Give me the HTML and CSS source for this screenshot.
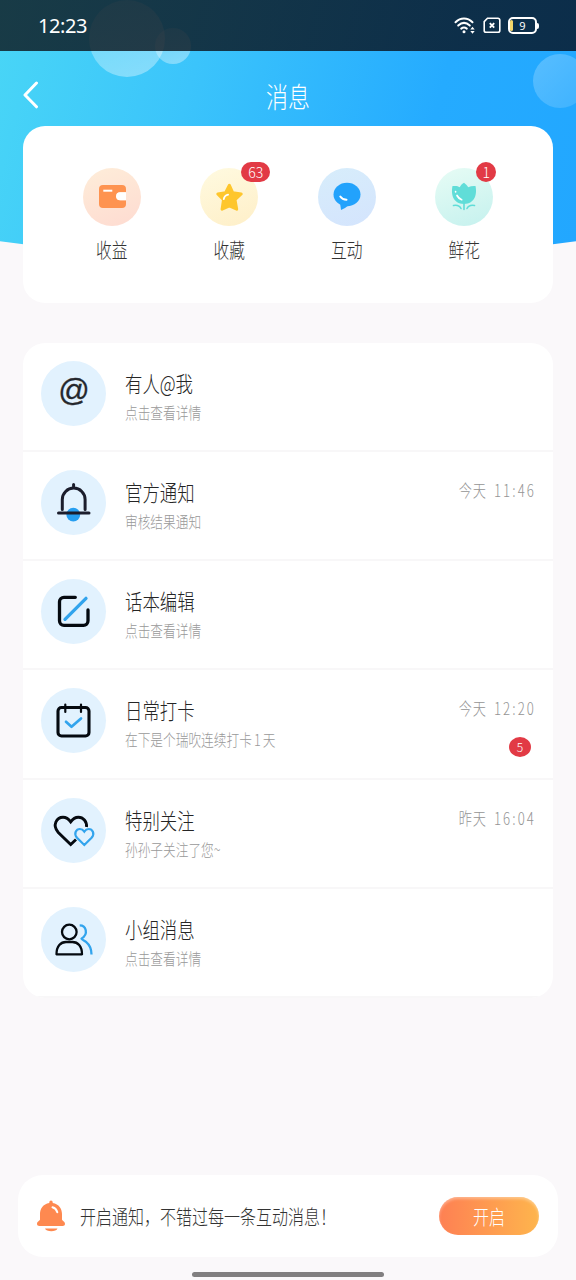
FILE: index.html
```html
<!DOCTYPE html>
<html lang="zh-CN">
<head>
    <meta charset="UTF-8">
    <meta name="viewport" content="width=device-width, initial-scale=1.0">
    <title>消息</title>
    <link rel="stylesheet" href="styles.css">
</head>
<body>
    <div class="page">
        <header class="header">
            <span class="bubble bubble-large"></span>
            <span class="bubble bubble-small"></span>
            <span class="bubble bubble-right"></span>

            <div class="status-bar">
                <span class="clock">12:23</span>
                <div class="status-icons">
                    <svg width="22" height="18" viewBox="0 0 22 18" fill="none" stroke="#fff" stroke-width="2" stroke-linecap="round">
                        <path d="M1.500 5.300C6.500.3 13.500.3 18.500 5.300M4.200 8.600c3.600-3.400 8-3.400 11.600 0M7.200 11.600c1.900-1.500 3.700-1.500 5.600 0"/>
                        <circle cx="10" cy="14.800" r="1.500" fill="#fff" stroke="none"/>
                        <path d="M16.300 12.500l2.200-2.700 2.200 2.700zM16.300 14l2.200 2.700 2.200-2.700z" fill="#fff" stroke="none"/>
                    </svg>
                    <svg class="sim" width="18" height="17" viewBox="0 0 18 17" fill="none" stroke="#fff" stroke-width="1.600">
                        <path d="M4.500 1.300H15a1.800 1.800 0 0 1 1.800 1.800v10.300a1.800 1.800 0 0 1-1.800 1.800H3a1.800 1.800 0 0 1-1.800-1.800V4.600z"/>
                        <path d="M6.800 6.200l4.400 4.400M11.200 6.200l-4.400 4.400" stroke-width="1.900"/>
                    </svg>
                    <span class="battery"><i class="battery-level"></i>9</span>
                </div>
            </div>

            <nav class="nav-bar">
                <svg class="back" width="16" height="28" viewBox="0 0 16 28" fill="none" stroke="#fff" stroke-width="3" stroke-linecap="round" stroke-linejoin="round">
                    <path d="M13.500 2L2 14l11.500 11.800"/>
                </svg>
                <h1 class="nav-title tall">消息</h1>
            </nav>
        </header>

        <!-- Shortcuts -->
        <section class="shortcuts">
            <a class="shortcut">
                <span class="shortcut-icon orange">
                    <svg width="58" height="58" viewBox="0 0 58 58">
                        <path fill="#fe9350" d="M20 17h19a4 4 0 0 1 4 4v3.300h-5.500a4 4 0 0 0 0 8H43V36a4 4 0 0 1-4 4H20a4 4 0 0 1-4-4V21a4 4 0 0 1 4-4z"/>
                        <path fill="#fff" d="M37 24.300h6v8h-6a4 4 0 0 1 0-8z"/>
                        <path stroke="#fff" stroke-width="2" d="M20.300 22.700h9"/>
                    </svg>
                </span>
                <span class="shortcut-name tall">收益</span>
            </a>
            <a class="shortcut">
                <span class="shortcut-icon yellow">
                    <svg width="58" height="58" viewBox="0 0 58 58">
                        <path fill="#fec62d" stroke="#fec62d" stroke-width="3" stroke-linejoin="round" d="M29.400 17.300l3.400 7.500 8.400 1.200-6.200 5.700 1.700 9.500-7.300-3.200-7.300 3.200 1.400-9.500-5.700-5.700 7.800-1.200z"/>
                        <path fill="none" stroke="#fff" stroke-width="1.800" stroke-linecap="round" d="M23.800 31.200c.2-2.200 1.800-4 4.300-4.600"/>
                    </svg>
                    <b class="badge badge-wide">63</b>
                </span>
                <span class="shortcut-name tall">收藏</span>
            </a>
            <a class="shortcut">
                <span class="shortcut-icon blue">
                    <svg width="58" height="58" viewBox="0 0 58 58" fill="#22a2fc">
                        <ellipse cx="29" cy="26.500" rx="13.500" ry="11.700"/>
                        <path d="M22 34.500l1 7.500q4-1.500 8-5z"/>
                        <path fill="none" stroke="#fff" stroke-width="2" stroke-linecap="round" d="M22.300 28.500q2 3.200 6.200 3.300"/>
                    </svg>
                </span>
                <span class="shortcut-name tall">互动</span>
            </a>
            <a class="shortcut">
                <span class="shortcut-icon green">
                    <svg width="58" height="58" viewBox="0 0 58 58">
                        <path fill="#60ddd8" d="M29 14.700q2.500 1.800 4.300 4.500 3-1.500 7.200-1.200c1.700 8.500-.5 17.500-11.500 18-11-.5-13.200-9.500-11.500-18 4.200-.3 5.200 0 7.200 1.200 1.600-2.800 2.600-3.500 4.300-4.500z"/>
                        <path fill="none" stroke="#60ddd8" stroke-width="1.600" stroke-linecap="round" d="M29 35v6.500M18.500 37.500q5.500-1 7.500 3M39.500 37.500q-5.500-1-7.500 3"/>
                        <path fill="none" stroke="#fff" stroke-width="1.700" stroke-linecap="round" d="M20.600 23.700v.1M22 27.500q1.500 3 4.700 4.200"/>
                    </svg>
                    <b class="badge">1</b>
                </span>
                <span class="shortcut-name tall">鲜花</span>
            </a>
        </section>

        <!-- Message list -->
        <ul class="messages">
            <li class="message">
                <span class="avatar at-sign">@</span>
                <div class="message-text">
                    <h2 class="message-title tall">有人@我</h2>
                    <p class="message-desc tall">点击查看详情</p>
                </div>
            </li>
            <li class="message">
                <span class="avatar">
                    <svg width="65" height="65" viewBox="0 0 65 65" fill="none" stroke="#1b1d2c" stroke-width="3" stroke-linecap="round">
                        <circle cx="32.300" cy="44.700" r="6.900" fill="#269ef0" stroke="none"/>
                        <path d="M21.300 39.500V29.500a11.400 11.400 0 0 1 22.800 0v10M32.600 14.500v3.500M17.500 43h30.500"/>
                    </svg>
                </span>
                <div class="message-text">
                    <h2 class="message-title tall">官方通知</h2>
                    <p class="message-desc tall">审核结果通知</p>
                </div>
                <div class="message-side"><time class="message-time tall">今天 <span class="digits">11:46</span></time></div>
            </li>
            <li class="message">
                <span class="avatar">
                    <svg width="65" height="65" viewBox="0 0 65 65" fill="none" stroke="#050a10" stroke-width="3.300" stroke-linecap="round">
                        <path d="M34.300 18.300H23a4.500 4.500 0 0 0-4.500 4.500v19a4.500 4.500 0 0 0 4.500 4.500h19.500a4.500 4.500 0 0 0 4.500-4.500V31"/>
                        <path stroke="#32a4ed" d="M24 40.300l21-21"/>
                    </svg>
                </span>
                <div class="message-text">
                    <h2 class="message-title tall">话本编辑</h2>
                    <p class="message-desc tall">点击查看详情</p>
                </div>
            </li>
            <li class="message">
                <span class="avatar">
                    <svg width="65" height="65" viewBox="0 0 65 65" fill="none" stroke="#050a10" stroke-width="3.100" stroke-linecap="round" stroke-linejoin="round">
                        <rect x="17" y="19.500" width="31" height="28.500" rx="3.500"/>
                        <path stroke-width="2.200" d="M24.300 16.500v7.500M40 16.500v7.500"/>
                        <path stroke="#32a4ed" stroke-width="2.700" d="M25 33.800l5.500 5 9.500-8.300"/>
                    </svg>
                </span>
                <div class="message-text">
                    <h2 class="message-title tall">日常打卡</h2>
                    <p class="message-desc tall">在下是个瑞吹连续打卡<span class="count">1</span>天</p>
                </div>
                <div class="message-side">
                    <time class="message-time tall">今天 <span class="digits">12:20</span></time>
                    <b class="unread">5</b>
                </div>
            </li>
            <li class="message">
                <span class="avatar">
                    <svg width="65" height="65" viewBox="0 0 65 65" fill="none" stroke="#050a10" stroke-width="2.900">
                        <path d="M35 41.500l-5.300 5L17.300 34.500c-6.500-7.500-1.500-15.300 4.700-15.300 3.300 0 5.700 1.800 7.700 4.600 2-2.800 4.400-4.600 7.700-4.600 4.800 0 8.600 4.300 8.100 9.800"/>
                        <path stroke="#32a4ed" stroke-width="2.200" d="M43.300 47l-7.300-7.200c-3.700-4.300-.7-8.800 2.900-8.800 1.900 0 3.300 1 4.400 2.600 1.100-1.600 2.500-2.600 4.400-2.600 3.600 0 6.600 4.500 2.900 8.800z"/>
                    </svg>
                </span>
                <div class="message-text">
                    <h2 class="message-title tall">特别关注</h2>
                    <p class="message-desc tall">孙孙子关注了您~</p>
                </div>
                <div class="message-side"><time class="message-time tall">昨天 <span class="digits">16:04</span></time></div>
            </li>
            <li class="message">
                <span class="avatar">
                    <svg width="65" height="65" viewBox="0 0 65 65" fill="none" stroke="#050a10" stroke-width="2.300" stroke-linejoin="round">
                        <circle cx="28.300" cy="25" r="7.300"/>
                        <path d="M15.500 47.300c0-8.300 4.300-12.300 9.500-12.300h6.500c5.200 0 9.500 4 9.500 12.300z"/>
                        <path stroke="#32a4ed" d="M38.700 18.300c6.500 0 9 8.700 1.800 13.300 1 1.500 2.700 1.700 4.500 3.200 3.300 2.700 5.500 6 5.500 12.700"/>
                    </svg>
                </span>
                <div class="message-text">
                    <h2 class="message-title tall">小组消息</h2>
                    <p class="message-desc tall">点击查看详情</p>
                </div>
            </li>
        </ul>

        <!-- Notification prompt -->
        <footer class="prompt">
            <svg class="prompt-bell" width="30" height="34" viewBox="0 0 30 34" fill="#fe8950">
                <path d="M13.300 3.300a1.700 1.700 0 0 1 3.400 0v.7c6.300 1 9.300 6 9.300 11v5.500c0 1.200 3 1.900 3 4.500 0 1.300-1 2-2.300 2H3.300C2 27 1 26.300 1 25c0-2.600 3-3.300 3-4.500V15c0-5 3-10 9.300-11z"/>
                <path d="M9 29.500h12.500c-1 3.700-11.500 3.700-12.500 0z"/>
                <path d="M16.500 8.300q3.800 1.200 4.800 5" fill="none" stroke="#fff" stroke-width="2" stroke-linecap="round"/>
            </svg>
            <span class="prompt-text tall">开启通知，不错过每一条互动消息！</span>
            <button class="prompt-button"><span class="tall">开启</span></button>
        </footer>
        <div class="home-indicator"></div>
    </div>
</body>
</html>
```

FILE: styles.css
```css
* {
    box-sizing: border-box;
}

body {
    margin: 0;
    background: #faf8fa;
    color: #333;
    font-family: "Noto Sans CJK SC", sans-serif;
    font-weight: 300;
}

h1, h2, p, ul {
    margin: 0;
    padding: 0;
    font-weight: 300;
}

svg {
    display: block;
}

.page {
    width: 576px;
    height: 1280px;
    overflow: hidden;
    display: flex;
    flex-direction: column;
}

/* narrow, tall lettering */
.tall {
    display: block;
    white-space: nowrap;
    transform: scaleY(1.27);
}

/* Header */
.header {
    position: relative;
    height: 261px;
    flex-shrink: 0;
    background: linear-gradient(105deg, #49d6f6 0%, #3bc4fb 33%, #25abff 72%, #22a7ff 100%);
    clip-path: circle(2100px at 50% -1839px);
}

.status-bar {
    position: relative;
    height: 51px;
    padding: 0 37px 0 38px;
    display: flex;
    align-items: center;
    justify-content: space-between;
    background: linear-gradient(100deg, rgba(12, 20, 26, 0.8), rgba(6, 15, 29, 0.8));
    color: #fff;
}

.clock {
    font-family: "Noto Sans", sans-serif;
    font-size: 20px;
    font-weight: 400;
    letter-spacing: -0.4px;
}

.status-icons {
    display: flex;
    align-items: center;
    gap: 7px;
}

.battery {
    position: relative;
    width: 29px;
    height: 17px;
    margin-right: 2px;
    border: 2px solid #fff;
    border-radius: 5px;
    font: 400 11px/13px "Noto Sans", sans-serif;
    text-align: center;
}

.battery::after {
    content: "";
    position: absolute;
    right: -4px;
    top: 4px;
    width: 2px;
    height: 6px;
    border-radius: 0 2px 2px 0;
    background: #fff;
}

.battery-level {
    position: absolute;
    left: 0;
    top: 1px;
    width: 3px;
    height: 11px;
    border-radius: 2px;
    background: #f5d76a;
}

.bubble {
    position: absolute;
    border-radius: 50%;
    background: linear-gradient(160deg, rgba(255, 255, 255, 0.2), rgba(255, 255, 255, 0.38));
}

.bubble-large {
    left: 89px;
    top: 0;
    width: 76px;
    height: 77px;
}

.bubble-small {
    left: 155px;
    top: 28px;
    width: 36px;
    height: 36px;
}

.bubble-right {
    left: 533px;
    top: 54px;
    width: 54px;
    height: 54px;
    background: linear-gradient(135deg, rgba(255, 255, 255, 0.24), rgba(255, 255, 255, 0.12));
}

.nav-bar {
    height: 75px;
    padding: 13px 23px 0;
    display: grid;
    grid-template-columns: 16px 1fr 16px;
    align-items: center;
}

.nav-title {
    color: #fff;
    font-size: 22px;
    line-height: 30px;
    text-align: center;
}

/* Shortcuts */
.shortcuts {
    position: relative;
    flex-shrink: 0;
    height: 177px;
    margin: -135px 23px 0;
    padding: 42px 30px 0;
    display: grid;
    grid-template-columns: repeat(4, 1fr);
    align-items: start;
    border-radius: 22px;
    background: #fff;
}

.shortcut {
    display: flex;
    flex-direction: column;
    align-items: center;
    gap: 12px;
}

.shortcut-icon {
    position: relative;
    width: 58px;
    height: 58px;
    border-radius: 50%;
}

.orange {
    background: linear-gradient(160deg, #feedd9, #fedbd1);
}

.yellow {
    background: linear-gradient(160deg, #fffae0, #feefc8);
}

.blue {
    background: linear-gradient(160deg, #d7edfb, #d4e4fd);
}

.green {
    background: linear-gradient(160deg, #e7fcf5, #c5f1ee);
}

.shortcut-name {
    font-size: 15.7px;
    line-height: 24px;
}

.badge {
    position: absolute;
    top: -6px;
    left: 41px;
    width: 20px;
    height: 20px;
    border-radius: 10px;
    background: #e23a45;
    color: #fff;
    font-size: 14px;
    font-weight: 300;
    line-height: 20px;
    text-align: center;
}

.badge-wide {
    width: 29px;
}

/* Message list */
.messages {
    flex-shrink: 0;
    height: 655px;
    margin: 40px 23px 0;
    display: grid;
    grid-template-rows: repeat(6, 1fr);
    border-radius: 22px;
    background: #fff;
    overflow: hidden;
    list-style: none;
}

.message {
    display: flex;
    align-items: flex-start;
    padding: 18px 18px 0;
    border-bottom: 2px solid #f8f7f8;
}

.avatar {
    flex-shrink: 0;
    width: 65px;
    height: 65px;
    border-radius: 50%;
    background: #e2f2fe;
}

.at-sign {
    color: #25282d;
    font: italic 400 31px/60px "Liberation Sans", sans-serif;
    text-align: center;
    -webkit-text-stroke: 0.3px #25282d;
}

.message-text {
    flex: 1;
    padding: 10px 0 0 19px;
}

.message-title {
    font-size: 17.4px;
    line-height: 24px;
    color: #252525;
}

.message-desc {
    margin-top: 8px;
    font-size: 12.7px;
    line-height: 20px;
    color: #999;
}

.count {
    padding: 0 2px;
}

.message-side {
    display: flex;
    flex-direction: column;
    align-items: flex-end;
    padding-top: 11px;
}

.message-time {
    font-size: 13.2px;
    line-height: 20px;
    letter-spacing: 1px;
    word-spacing: 3px;
    margin-right: -1px;
    color: #949494;
}

.digits {
    letter-spacing: 2.1px;
}

.unread {
    width: 22px;
    height: 20px;
    margin: 18px 4px 0 0;
    border-radius: 50%;
    background: #e23a45;
    color: #fff;
    font-size: 12px;
    font-weight: 300;
    line-height: 20px;
    text-align: center;
}

/* Notification prompt */
.prompt {
    flex-shrink: 0;
    height: 82px;
    margin: auto 18px 15px;
    padding: 0 18px;
    display: flex;
    align-items: center;
    border-radius: 25px;
    background: #fff;
}

.prompt-text {
    flex: 1;
    padding-left: 14px;
    font-size: 16px;
    line-height: 24px;
}

.prompt-button {
    width: 100px;
    height: 38px;
    margin-right: 1px;
    padding: 0;
    border: none;
    border-radius: 19px;
    background: linear-gradient(90deg, #fe8053, #feb54d);
    box-shadow: inset 0 2px 3px rgba(255, 255, 255, 0.35);
    color: #fff;
    font-family: inherit;
    font-size: 16px;
    font-weight: 300;
}

.home-indicator {
    flex-shrink: 0;
    width: 192px;
    height: 5px;
    margin: 0 auto 3px;
    border-radius: 3px;
    background: #817f80;
}
```
